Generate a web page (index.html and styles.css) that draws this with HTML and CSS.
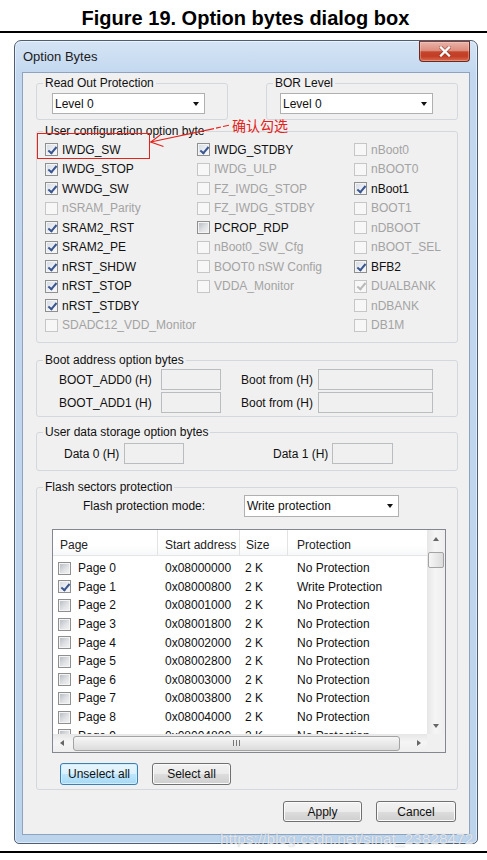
FILE: index.html
```html
<!DOCTYPE html>
<html>
<head>
<meta charset="utf-8">
<title>Option bytes dialog box</title>
<link rel="stylesheet" href="styles.css">
</head>
<body>
<div class="fig-title">Figure 19. Option bytes dialog box</div>

<div class="window">
  <div class="titlebar">
    <div class="wtitle">Option Bytes</div>
    <div class="close">
      <svg width="12" height="11" viewBox="0 0 12 11">
        <path d="M2 1.5 L10 9.5 M10 1.5 L2 9.5" stroke="#7a2a1c" stroke-opacity="0.45" stroke-width="4" stroke-linecap="square"/>
        <path d="M2 1.5 L10 9.5 M10 1.5 L2 9.5" stroke="#ffffff" stroke-width="2.3" stroke-linecap="square"/>
      </svg>
    </div>
  </div>

  <div class="client">
    <div class="toprow">
      <fieldset class="grp g-half">
        <legend>Read Out Protection</legend>
        <div class="combo c-rop"><span>Level 0</span><i class="dd"></i></div>
      </fieldset>
      <fieldset class="grp g-half">
        <legend>BOR Level</legend>
        <div class="combo c-bor"><span>Level 0</span><i class="dd"></i></div>
      </fieldset>
    </div>

    <fieldset class="grp g-user">
      <legend>User configuration option byte</legend>
      <div class="opts">
        <div class="col col1">
          <div class="opt"><span class="cb on"></span><span>IWDG_SW</span></div>
          <div class="opt"><span class="cb on"></span><span>IWDG_STOP</span></div>
          <div class="opt"><span class="cb on"></span><span>WWDG_SW</span></div>
          <div class="opt dis"><span class="cb dis"></span><span>nSRAM_Parity</span></div>
          <div class="opt"><span class="cb on"></span><span>SRAM2_RST</span></div>
          <div class="opt"><span class="cb on"></span><span>SRAM2_PE</span></div>
          <div class="opt"><span class="cb on"></span><span>nRST_SHDW</span></div>
          <div class="opt"><span class="cb on"></span><span>nRST_STOP</span></div>
          <div class="opt"><span class="cb on"></span><span>nRST_STDBY</span></div>
          <div class="opt dis"><span class="cb dis"></span><span>SDADC12_VDD_Monitor</span></div>
        </div>
        <div class="col col2">
          <div class="opt"><span class="cb on"></span><span>IWDG_STDBY</span></div>
          <div class="opt dis"><span class="cb dis"></span><span>IWDG_ULP</span></div>
          <div class="opt dis"><span class="cb dis"></span><span>FZ_IWDG_STOP</span></div>
          <div class="opt dis"><span class="cb dis"></span><span>FZ_IWDG_STDBY</span></div>
          <div class="opt"><span class="cb"></span><span>PCROP_RDP</span></div>
          <div class="opt dis"><span class="cb dis"></span><span>nBoot0_SW_Cfg</span></div>
          <div class="opt dis"><span class="cb dis"></span><span>BOOT0 nSW Config</span></div>
          <div class="opt dis"><span class="cb dis"></span><span>VDDA_Monitor</span></div>
        </div>
        <div class="col col3">
          <div class="opt dis"><span class="cb dis"></span><span>nBoot0</span></div>
          <div class="opt dis"><span class="cb dis"></span><span>nBOOT0</span></div>
          <div class="opt"><span class="cb on"></span><span>nBoot1</span></div>
          <div class="opt dis"><span class="cb dis"></span><span>BOOT1</span></div>
          <div class="opt dis"><span class="cb dis"></span><span>nDBOOT</span></div>
          <div class="opt dis"><span class="cb dis"></span><span>nBOOT_SEL</span></div>
          <div class="opt"><span class="cb on"></span><span>BFB2</span></div>
          <div class="opt dis"><span class="cb dis on"></span><span>DUALBANK</span></div>
          <div class="opt dis"><span class="cb dis"></span><span>nDBANK</span></div>
          <div class="opt dis"><span class="cb dis"></span><span>DB1M</span></div>
        </div>
      </div>
    </fieldset>

    <fieldset class="grp g-boot">
      <legend>Boot address option bytes</legend>
      <div class="boot-rows">
        <div class="frow"><span class="lbl-b1">BOOT_ADD0 (H)</span><span class="tb tb-60"></span><span class="lbl-b2">Boot from (H)</span><span class="tb tb-115"></span></div>
        <div class="frow"><span class="lbl-b1">BOOT_ADD1 (H)</span><span class="tb tb-60"></span><span class="lbl-b2">Boot from (H)</span><span class="tb tb-115"></span></div>
      </div>
    </fieldset>

    <fieldset class="grp g-data">
      <legend>User data storage option bytes</legend>
      <div class="frow data-row"><span class="lbl-d1">Data 0 (H)</span><span class="tb tb-60"></span><span class="lbl-d2">Data 1 (H)</span><span class="tb tb-61"></span></div>
    </fieldset>

    <fieldset class="grp g-flash">
      <legend>Flash sectors protection</legend>
      <div class="frow mode-row"><span class="lbl-mode">Flash protection mode:</span><div class="combo c-mode"><span>Write protection</span><i class="dd"></i></div></div>

      <div class="list">
        <div class="list-main">
          <div class="lv">
            <div class="lv-head">
              <div class="hc c1">Page</div>
              <div class="hc c2">Start address</div>
              <div class="hc c3">Size</div>
              <div class="hc c4">Protection</div>
            </div>
            <div class="lv-rows">
              <div class="lr"><div class="rc c1"><span class="cb"></span><span>Page 0</span></div><div class="rc c2">0x08000000</div><div class="rc c3">2 K</div><div class="rc c4">No Protection</div></div>
              <div class="lr"><div class="rc c1"><span class="cb on"></span><span>Page 1</span></div><div class="rc c2">0x08000800</div><div class="rc c3">2 K</div><div class="rc c4">Write Protection</div></div>
              <div class="lr"><div class="rc c1"><span class="cb"></span><span>Page 2</span></div><div class="rc c2">0x08001000</div><div class="rc c3">2 K</div><div class="rc c4">No Protection</div></div>
              <div class="lr"><div class="rc c1"><span class="cb"></span><span>Page 3</span></div><div class="rc c2">0x08001800</div><div class="rc c3">2 K</div><div class="rc c4">No Protection</div></div>
              <div class="lr"><div class="rc c1"><span class="cb"></span><span>Page 4</span></div><div class="rc c2">0x08002000</div><div class="rc c3">2 K</div><div class="rc c4">No Protection</div></div>
              <div class="lr"><div class="rc c1"><span class="cb"></span><span>Page 5</span></div><div class="rc c2">0x08002800</div><div class="rc c3">2 K</div><div class="rc c4">No Protection</div></div>
              <div class="lr"><div class="rc c1"><span class="cb"></span><span>Page 6</span></div><div class="rc c2">0x08003000</div><div class="rc c3">2 K</div><div class="rc c4">No Protection</div></div>
              <div class="lr"><div class="rc c1"><span class="cb"></span><span>Page 7</span></div><div class="rc c2">0x08003800</div><div class="rc c3">2 K</div><div class="rc c4">No Protection</div></div>
              <div class="lr"><div class="rc c1"><span class="cb"></span><span>Page 8</span></div><div class="rc c2">0x08004000</div><div class="rc c3">2 K</div><div class="rc c4">No Protection</div></div>
              <div class="lr"><div class="rc c1"><span class="cb"></span><span>Page 9</span></div><div class="rc c2">0x08004800</div><div class="rc c3">2 K</div><div class="rc c4">No Protection</div></div>
            </div>
          </div>
          <div class="vscroll">
            <div class="sbtn"><i class="tri-up"></i></div>
            <div class="vtrack"><div class="vthumb"></div></div>
            <div class="sbtn"><i class="tri-down"></i></div>
          </div>
        </div>
        <div class="hbar-row">
          <div class="hscroll">
            <div class="sbtn-h"><i class="tri-left"></i></div>
            <div class="hthumb"><i class="grip"></i></div>
            <div class="htrack"></div>
            <div class="sbtn-h"><i class="tri-right"></i></div>
          </div>
          <div class="corner"></div>
        </div>
      </div>

      <div class="btnrow">
        <div class="btn focus b-unsel">Unselect all</div>
        <div class="btn b-sel">Select all</div>
      </div>
    </fieldset>

    <div class="dlg-btns">
      <div class="btn b-apply">Apply</div>
      <div class="btn b-cancel">Cancel</div>
    </div>
  </div>
</div>

<div class="figline"></div>

<div class="annot-box"></div>
<svg class="annot-arrow" width="90" height="32" viewBox="0 0 90 32">
  <path d="M5.7 24 L69 10.6 M71 10.1 L76 9 M78 8.5 L84 7.2" stroke="#e4231b" stroke-width="1.1" fill="none"/>
  <path d="M15.5 16.8 L5.7 24 L18.5 28.5" stroke="#e4231b" stroke-width="1.1" fill="none"/>
</svg>
<div class="annot-text">确认勾选</div>

<div class="watermark">https://blog.csdn.net/sinat_23828472</div>
</body>
</html>
```

FILE: styles.css
```css
* { box-sizing: border-box; }

body {
  margin: 0;
  width: 487px;
  height: 860px;
  position: relative;
  overflow: hidden;
  background: #fff;
  font-family: "Liberation Sans", Arial, sans-serif;
  font-size: 12px;
  color: #111;
}

.fig-title {
  padding: 8px 0 3px 4px;
  line-height: 20px;
  font-size: 20px;
  font-weight: bold;
  text-align: center;
  color: #000;
  border-bottom: 2px solid #000;
}

.window {
  margin: 7px 0 0 14px;
  width: 464px;
  border: 1px solid #4d5e74;
  border-radius: 7px 7px 5px 5px;
  padding: 0 7px 8px;
  background: linear-gradient(180deg, #d5e4f5 0%, #c3d8ef 4%, #bdd4ed 100%);
  box-shadow: inset 0 0 0 1px rgba(255, 255, 255, 0.5);
}

.titlebar {
  height: 31px;
  display: flex;
  justify-content: space-between;
  align-items: flex-start;
}

.wtitle {
  margin-top: 8px;
  padding-left: 1px;
  font-size: 13px;
  line-height: 15px;
  color: #1b1b1b;
}

.close {
  width: 51px;
  height: 21px;
  border: 1px solid #6b2a20;
  border-top-color: #8a3a2e;
  border-radius: 0 0 4px 4px;
  display: flex;
  align-items: center;
  justify-content: center;
  background: linear-gradient(180deg, #eab3a8 0%, #dc8d7d 45%, #c6452d 52%, #c23d25 75%, #d96a4e 100%);
  box-shadow: inset 0 0 0 1px rgba(255, 220, 210, 0.35);
}

.client {
  height: 763px;
  border: 1px solid #8da3be;
  background: #f0f0f0;
  padding: 0 11px 0 13px;
  display: flex;
  flex-direction: column;
}

/* group boxes */
.grp {
  margin: 0;
  padding: 0;
  min-width: 0;
  border: 1px solid #d3d8dd;
  border-radius: 3px;
}

.grp legend {
  margin-left: 6px;
  padding: 0 2px;
  line-height: 14px;
  font-size: 12px;
  color: #111;
}

.toprow {
  display: flex;
  justify-content: space-between;
  margin-top: 3px;
}

.g-half { width: 192px; }

.combo {
  height: 21px;
  display: flex;
  align-items: center;
  justify-content: space-between;
  border: 1px solid #b0b0b0;
  background: #fff;
  padding: 0 5px 0 2px;
  white-space: nowrap;
}

.c-rop { width: 153px; margin: 3px 0 5px 15px; }
.c-bor { width: 153px; margin: 3px 0 5px 13px; }

.dd {
  width: 0;
  height: 0;
  border-left: 3.5px solid transparent;
  border-right: 3.5px solid transparent;
  border-top: 4px solid #111;
}

/* user configuration */
.g-user { margin-top: 4px; }

.opts {
  display: flex;
  margin: 2px 0 7px 8px;
}

.col { display: flex; flex-direction: column; }
.col1 { width: 152px; }
.col2 { width: 157px; }

.opt {
  height: 19.5px;
  display: flex;
  align-items: center;
  gap: 4px;
  white-space: nowrap;
}

.opt.dis { color: #a3a3a3; }

/* checkboxes */
.cb {
  flex: none;
  position: relative;
  width: 13px;
  height: 13px;
  border: 1px solid #8e8f8f;
  background: linear-gradient(135deg, #b3b8bf 0%, #dfe1e4 55%, #f5f5f6 100%);
  box-shadow: inset 0 0 0 1px #f4f4f4;
}

.cb.on {
  background: linear-gradient(135deg, #d3dae3 0%, #eef0f3 60%, #f9f9fa 100%);
}

.cb.on::after {
  content: "";
  position: absolute;
  left: 3.5px;
  top: 0.5px;
  width: 3px;
  height: 7px;
  border: solid #3a5690;
  border-width: 0 2px 2px 0;
  transform: rotate(40deg);
}

.cb.dis {
  border-color: #c6c6c6;
  background: #f7f7f7;
  box-shadow: none;
}

.cb.dis.on::after { border-color: #b9b9b9; }

/* boot address */
.g-boot { margin-top: 10px; }

.frow {
  display: flex;
  align-items: center;
  height: 21px;
  white-space: nowrap;
}

.boot-rows {
  display: flex;
  flex-direction: column;
  gap: 2px;
  margin: 2px 0 3px 22px;
}

.lbl-b1 { width: 102px; }
.lbl-b2 { width: 77px; margin-left: 20px; }

.tb {
  height: 21px;
  border: 1px solid #b9bdc0;
  background: #f0f0f0;
}

.tb-60 { width: 60px; }
.tb-61 { width: 61px; }
.tb-115 { width: 115px; }

/* user data */
.g-data { margin-top: 8px; }
.data-row { margin: 4px 0 6px 27px; }
.lbl-d1 { width: 60px; }
.lbl-d2 { width: 59px; margin-left: 89px; }

/* flash */
.g-flash { margin-top: 9px; }
.mode-row { height: 22px; margin: 1px 0 0 46px; }
.lbl-mode { width: 161px; }
.c-mode { width: 155px; height: 22px; }

.list {
  margin: 12px 0 0 15px;
  width: 394px;
  height: 224px;
  border: 1px solid #828790;
  background: #fff;
  display: flex;
  flex-direction: column;
}

.list-main {
  height: 204px;
  display: flex;
}

.lv {
  flex: 1;
  min-width: 0;
  overflow: hidden;
}

.lv-head {
  display: flex;
  height: 26px;
  border-bottom: 1px solid #e5e5e5;
  background: linear-gradient(180deg, #ffffff 0%, #ffffff 60%, #f7f8f9 100%);
}

.hc {
  padding-top: 6px;
  line-height: 18px;
  color: #222;
  border-right: 1px solid #e3e3e3;
  white-space: nowrap;
}

.c1 { width: 105px; }
.c2 { width: 82px; }
.c3 { width: 48px; }
.c4 { flex: 1; border-right: none; }

.hc.c1 { padding-left: 7px; }
.hc.c2 { padding-left: 7px; }
.hc.c3 { padding-left: 6px; }
.hc.c4 { padding-left: 9px; }

.lv-rows { padding-top: 3px; }

.lr {
  height: 18.6px;
  display: flex;
  align-items: center;
  white-space: nowrap;
}

.rc.c1 {
  display: flex;
  align-items: center;
  gap: 7px;
  padding-left: 5px;
}
.rc.c2 { padding-left: 7px; }
.rc.c3 { padding-left: 5px; }
.rc.c4 { padding-left: 9px; }

.vscroll {
  width: 18px;
  display: flex;
  flex-direction: column;
  background: linear-gradient(90deg, #e6e6e6 0%, #f5f5f5 45%, #eeeeee 100%);
}

.sbtn {
  height: 17px;
  display: flex;
  align-items: center;
  justify-content: center;
}

.vtrack { flex: 1; padding: 5px 1px 0 1px; }

.vthumb {
  height: 16px;
  border: 1px solid #a3a3a3;
  border-radius: 2px;
  background: linear-gradient(90deg, #f6f6f6 0%, #e9e9e9 50%, #dcdcdc 100%);
}

.tri-up {
  width: 0; height: 0;
  border-left: 3.5px solid transparent;
  border-right: 3.5px solid transparent;
  border-bottom: 4px solid #666;
}

.tri-down {
  width: 0; height: 0;
  border-left: 3.5px solid transparent;
  border-right: 3.5px solid transparent;
  border-top: 4px solid #666;
}

.tri-left {
  width: 0; height: 0;
  border-top: 3.5px solid transparent;
  border-bottom: 3.5px solid transparent;
  border-right: 4px solid #666;
}

.tri-right {
  width: 0; height: 0;
  border-top: 3.5px solid transparent;
  border-bottom: 3.5px solid transparent;
  border-left: 4px solid #666;
}

.hbar-row {
  height: 18px;
  display: flex;
}

.hscroll {
  flex: 1;
  display: flex;
  align-items: center;
  background: linear-gradient(180deg, #e6e6e6 0%, #f5f5f5 45%, #eeeeee 100%);
}

.sbtn-h {
  width: 17px;
  height: 18px;
  display: flex;
  align-items: center;
  justify-content: center;
}

.hthumb {
  margin-left: 3px;
  width: 327px;
  height: 15px;
  border: 1px solid #a3a3a3;
  border-radius: 3px;
  background: linear-gradient(180deg, #f6f6f6 0%, #e9e9e9 50%, #dcdcdc 100%);
  display: flex;
  align-items: center;
  justify-content: center;
}

.grip {
  width: 7px;
  height: 6px;
  background: repeating-linear-gradient(90deg, #777 0 1px, transparent 1px 3px);
}

.htrack { flex: 1; }

.corner { width: 18px; background: #f0f0f0; }

/* buttons */
.btn {
  height: 22px;
  border: 1px solid #707070;
  border-radius: 3px;
  display: flex;
  align-items: center;
  justify-content: center;
  color: #111;
  white-space: nowrap;
  background: linear-gradient(180deg, #f2f2f2 0%, #ebebeb 50%, #dddddd 51%, #cfcfcf 100%);
  box-shadow: inset 0 0 0 1px #fbfbfb;
}

.btn.focus {
  border-color: #3c7fb1;
  background: linear-gradient(180deg, #eaf6fd 0%, #d9f0fc 50%, #bee6fd 51%, #a7d9f5 100%);
  box-shadow: inset 0 0 0 1px #cdeefc;
}

.btnrow {
  display: flex;
  gap: 14px;
  margin: 10px 0 4px 23px;
}

.b-unsel { width: 78px; }
.b-sel { width: 79px; }

.dlg-btns {
  display: flex;
  justify-content: flex-end;
  gap: 14px;
  margin: 11px 2px 0 0;
}

.dlg-btns .btn { height: 21px; }
.b-apply { width: 79px; }
.b-cancel { width: 80px; }

.figline {
  margin-top: 7px;
  height: 2px;
  background: #000;
}

/* overlays */
.annot-box {
  position: absolute;
  left: 37px;
  top: 133px;
  width: 113px;
  height: 26px;
  border: 1px solid #e4231b;
}

.annot-arrow {
  position: absolute;
  left: 145px;
  top: 118px;
}

.annot-text {
  position: absolute;
  left: 232px;
  top: 117px;
  font-family: "Noto Sans CJK SC", "Noto Sans CJK JP", sans-serif;
  font-size: 14px;
  line-height: 16px;
  color: #e4231b;
}

.watermark {
  position: absolute;
  left: 220px;
  top: 831px;
  font-size: 15.5px;
  line-height: 16px;
  white-space: nowrap;
  color: rgba(255, 255, 255, 0.72);
  text-shadow: 0 0 1px rgba(90, 100, 115, 0.45);
}
```
